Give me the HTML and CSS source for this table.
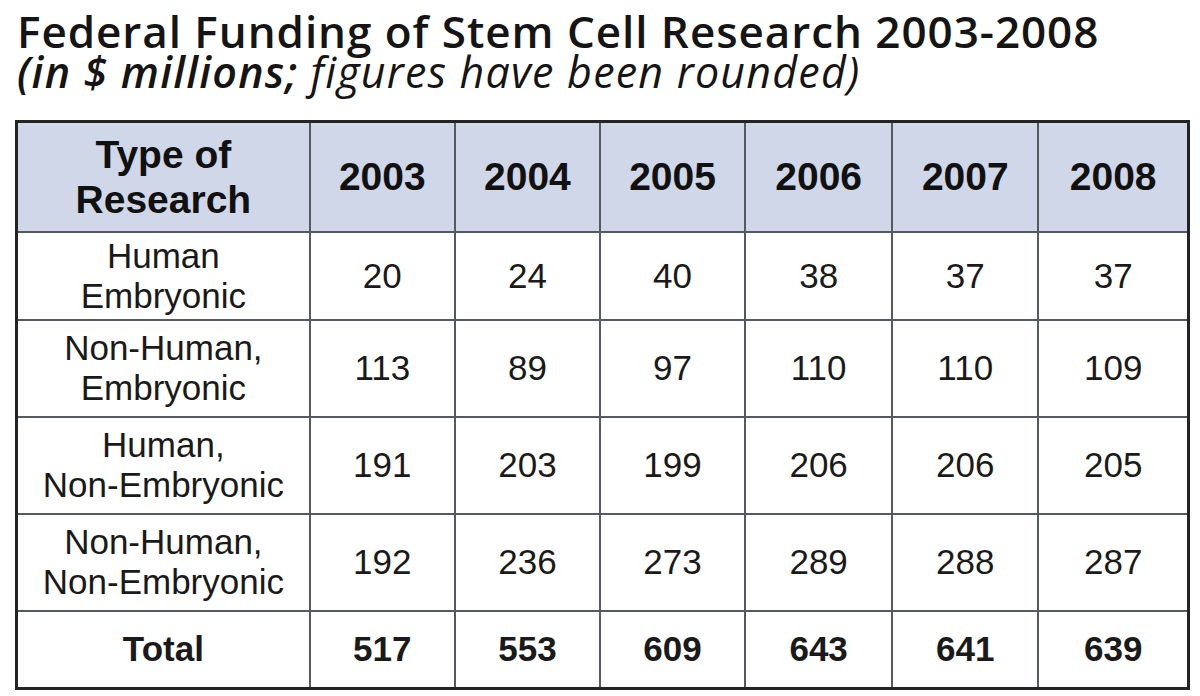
FILE: index.html
```html
<!DOCTYPE html>
<html>
<head>
<meta charset="utf-8">
<link rel="stylesheet" href="styles.css">
</head>
<body>
<div class="page">
  <h1 class="title">Federal Funding of Stem Cell Research 2003-2008</h1>
  <p class="subtitle"><span class="sub-strong">(in $ millions;</span> figures have been rounded)</p>
  <table class="funding">
    <colgroup>
      <col class="c-type"><col class="c-y1"><col class="c-y2"><col class="c-y3"><col class="c-y4"><col class="c-y5"><col class="c-y6">
    </colgroup>
    <thead>
      <tr class="head-row">
        <th>Type of<br>Research</th>
        <th>2003</th><th>2004</th><th>2005</th><th>2006</th><th>2007</th><th>2008</th>
      </tr>
    </thead>
    <tbody>
      <tr class="row-first">
        <td class="label">Human<br>Embryonic</td>
        <td>20</td><td>24</td><td>40</td><td>38</td><td>37</td><td>37</td>
      </tr>
      <tr class="row">
        <td class="label">Non-Human,<br>Embryonic</td>
        <td>113</td><td>89</td><td>97</td><td>110</td><td>110</td><td>109</td>
      </tr>
      <tr class="row">
        <td class="label">Human,<br>Non-Embryonic</td>
        <td>191</td><td>203</td><td>199</td><td>206</td><td>206</td><td>205</td>
      </tr>
      <tr class="row">
        <td class="label">Non-Human,<br>Non-Embryonic</td>
        <td>192</td><td>236</td><td>273</td><td>289</td><td>288</td><td>287</td>
      </tr>
      <tr class="total-row">
        <td class="label">Total</td>
        <td>517</td><td>553</td><td>609</td><td>643</td><td>641</td><td>639</td>
      </tr>
    </tbody>
  </table>
</div>
</body>
</html>
```
FILE: styles.css
```css
html, body {
  margin: 0;
  padding: 0;
  background: #ffffff;
}

.page {
  padding: 9px 10px 0 15px;
  color: #111;
}

.title {
  margin: 0;
  font-family: "Open Sans", "Noto Sans", sans-serif;
  font-weight: 600;
  font-size: 44px;
  line-height: 44px;
  letter-spacing: 0.95px;
  padding-left: 2px;
  color: #151515;
  white-space: nowrap;
}

.subtitle {
  margin: 0 0 29px 0;
  font-family: "Open Sans", "Noto Sans", sans-serif;
  font-style: italic;
  font-weight: 400;
  font-size: 43px;
  line-height: 38px;
  letter-spacing: 1.2px;
  padding-left: 2px;
  color: #151515;
  white-space: nowrap;
}

.sub-strong {
  font-weight: 600;
}

.funding {
  border-collapse: collapse;
  width: 1175px;
  font-family: "Liberation Sans", Arial, sans-serif;
  border: 3px solid #242424;
  table-layout: fixed;
}

.c-type { width: 293px; }
.c-y1 { width: 145px; }
.c-y2 { width: 145px; }
.c-y3 { width: 145px; }
.c-y4 { width: 147px; }
.c-y5 { width: 146px; }
.c-y6 { width: 150px; }

.funding th,
.funding td {
  border: 2px solid #555a60;
  text-align: center;
  vertical-align: middle;
  padding: 0;
}

.funding th {
  background: #d0d7e8;
  font-weight: 700;
  font-size: 39px;
  line-height: 45px;
  color: #111;
}

.head-row { height: 110px; }

.funding td {
  font-size: 35px;
  line-height: 40px;
  color: #1a1a1a;
}

.row-first { height: 88px; }
.row { height: 97px; }
.total-row { height: 78px; }

.total-row td {
  font-weight: 700;
}
```
